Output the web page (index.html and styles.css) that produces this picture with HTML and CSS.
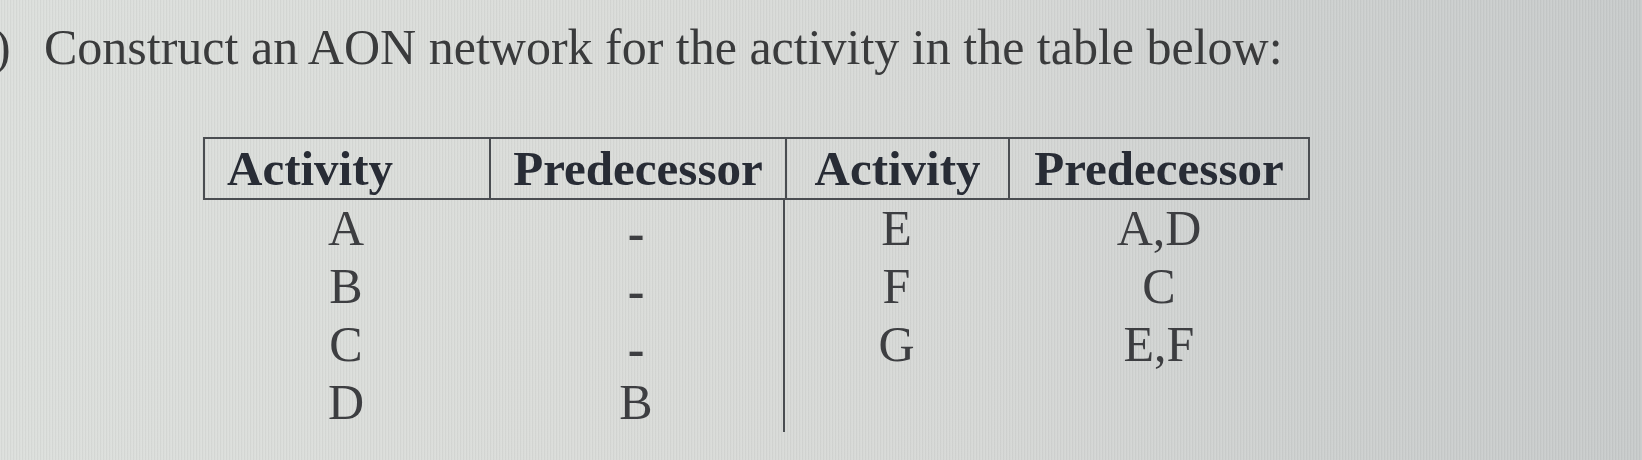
FILE: index.html
```html
<!DOCTYPE html>
<html lang="en">
<head>
<meta charset="utf-8">
<title>AON network question</title>
<link rel="stylesheet" href="styles.css">
</head>
<body>
<div class="page">
  <div class="title">
    <span class="num">)</span>
    <span class="text">Construct an AON network for the activity in the table below:</span>
  </div>
  <div class="table">
    <div class="th c1 first">Activity</div>
    <div class="th c2">Predecessor</div>
    <div class="th c3">Activity</div>
    <div class="th c4 last">Predecessor</div>

    <div class="td c1">A</div>
    <div class="td c2 mid"><span class="dash">-</span></div>
    <div class="td c3">E</div>
    <div class="td c4">A,D</div>

    <div class="td c1">B</div>
    <div class="td c2 mid"><span class="dash">-</span></div>
    <div class="td c3">F</div>
    <div class="td c4">C</div>

    <div class="td c1">C</div>
    <div class="td c2 mid"><span class="dash">-</span></div>
    <div class="td c3">G</div>
    <div class="td c4">E,F</div>

    <div class="td c1">D</div>
    <div class="td c2 mid">B</div>
    <div class="td c3"></div>
    <div class="td c4"></div>
  </div>
</div>
</body>
</html>
```
FILE: styles.css
```css
html, body {
  margin: 0;
  padding: 0;
}
body {
  width: 1642px;
  height: 460px;
  overflow: hidden;
  font-family: "Liberation Serif", "Times New Roman", serif;
  background:
    repeating-linear-gradient(90deg, rgba(255,255,255,0.06) 0 1px, rgba(0,0,0,0.035) 1px 2px, rgba(255,255,255,0) 2px 3px),
    linear-gradient(90deg, #dcdfdc 0%, #dadcd9 35%, #d6d8d6 60%, #cdd0cf 80%, #c8cbcb 100%);
}
.page {
  padding-top: 19px;
}
.title {
  display: flex;
  font-size: 50px;
  line-height: 57px;
  color: #3a3b3c;
  white-space: nowrap;
}
.num {
  margin-left: -6px;
  width: 50px;
  flex: none;
}
.table {
  margin-top: 61px;
  margin-left: 203px;
  display: grid;
  grid-template-columns: 286px 296px 223px 302px;
  grid-auto-rows: auto;
}
.th {
  font-weight: bold;
  font-size: 49px;
  line-height: 52px;
  height: 52px;
  padding: 4px 0 3px;
  color: #282c35;
  text-align: center;
  border-top: 2px solid #4a4d51;
  border-bottom: 2px solid #4a4d51;
  border-left: 2px solid #4a4d51;
}
.th.first {
  text-align: left;
  padding-left: 22px;
}
.th.last {
  border-right: 2px solid #4a4d51;
}
.td {
  height: 58px;
  font-size: 50px;
  line-height: 56px;
  color: #3d3e41;
  text-align: center;
}
.td.mid {
  border-right: 2px solid #4a4d51;
}
.dash {
  vertical-align: -5px;
  font-weight: bold;
}
```
